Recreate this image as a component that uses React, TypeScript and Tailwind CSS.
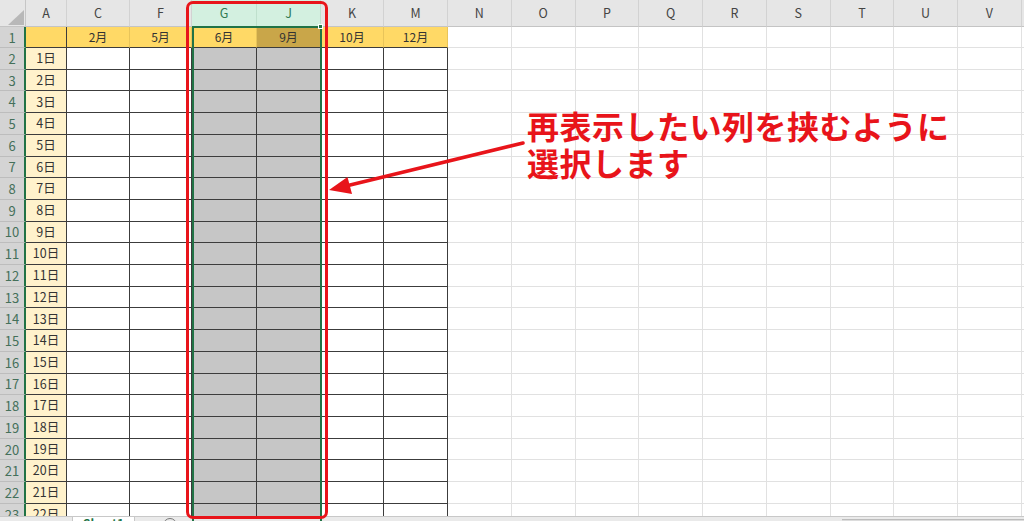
import React from 'react';

type Col = { key: string; month?: string; kind: 'a' | 'm' | 'x'; sel?: boolean };

const cols: Col[] = [
  { key: 'A', kind: 'a' },
  { key: 'C', kind: 'm', month: '2月' },
  { key: 'F', kind: 'm', month: '5月' },
  { key: 'G', kind: 'm', month: '6月', sel: true },
  { key: 'J', kind: 'm', month: '9月', sel: true },
  { key: 'K', kind: 'm', month: '10月' },
  { key: 'M', kind: 'm', month: '12月' },
  ...['N', 'O', 'P', 'Q', 'R', 'S', 'T', 'U', 'V', 'W'].map((k) => ({ key: k, kind: 'x' as const })),
];

const rows = Array.from({ length: 23 }, (_, i) => i + 1);

function headerCell(c: Col) {
  if (c.sel) {
    return (
      <div key={c.key} className="flex items-center justify-center bg-[#d3f0e0] text-[#2f7a52] border-r border-r-[#bfe0cd] border-b border-b-[#217346] text-[12.5px] leading-none">
        {c.key}
      </div>
    );
  }
  return (
    <div key={c.key} className="flex items-center justify-center bg-[#e6e6e6] text-[#444] border-r border-r-[#d2d2d2] border-b border-b-[#c4c4c4] text-[12.5px] leading-none">
      {c.key}
    </div>
  );
}

function dataCell(c: Col, r: number) {
  const k = `${c.key}${r}`;
  if (c.kind === 'a') {
    if (r === 1) {
      return <div key={k} className="bg-[#ffd966] border-r border-r-[#3c3c3c] border-b border-b-[#3c3c3c]" />;
    }
    return (
      <div key={k} className="flex items-center justify-center bg-[#fff2cc] text-[#333] border-r border-r-[#3c3c3c] border-b border-b-[#3c3c3c] text-[12.5px] leading-none">
        {r - 1}日
      </div>
    );
  }
  if (c.kind === 'm') {
    if (r === 1) {
      const dark = c.key === 'J';
      return (
        <div
          key={k}
          className={
            dark
              ? 'flex items-center justify-center bg-[#c9a649] text-[#333] border-r border-r-[#b8963c] border-b border-b-[#3c3c3c] text-[12px] leading-none'
              : 'flex items-center justify-center bg-[#ffd966] text-[#333] border-r border-r-[#e8c45a] border-b border-b-[#3c3c3c] text-[12px] leading-none'
          }
        >
          {c.month}
        </div>
      );
    }
    return (
      <div
        key={k}
        className={
          c.sel
            ? 'bg-[#c6c6c6] border-r border-r-[#3c3c3c] border-b border-b-[#3c3c3c]'
            : 'bg-white border-r border-r-[#3c3c3c] border-b border-b-[#3c3c3c]'
        }
      />
    );
  }
  return <div key={k} className="bg-white border-r border-r-[#e1e1e1] border-b border-b-[#e1e1e1]" />;
}

export default function App() {
  return (
    <div className="relative w-[1024px] h-[521px] overflow-hidden bg-white font-['Noto_Sans_CJK_JP',sans-serif]">
      <div className="h-[516px] overflow-hidden">
        <div className="grid w-max grid-cols-[26px_41px_63px_62px_65px_64px_63px_64px_repeat(10,63.75px)] grid-rows-[27px_21px_repeat(22,21.71px)]">
          {/* header row */}
          <div className="relative bg-[#e6e6e6] border-r border-r-[#c6c6c6] border-b border-b-[#c4c4c4]">
            <svg className="absolute left-0 top-0" width="26" height="27" viewBox="0 0 26 27">
              <polygon points="24,10 24,25 8,25" fill="#b8b8b8" />
            </svg>
          </div>
          {cols.map(headerCell)}

          {rows.map((r) => (
            <React.Fragment key={r}>
              <div className="flex items-center justify-center bg-[#d4d4d4] text-[#44705a] border-r-2 border-r-[#217346] border-b border-b-[#bdbdbd] text-[13px] leading-none">
                {r}
              </div>
              {cols.map((c) => dataCell(c, r))}
            </React.Fragment>
          ))}
        </div>
      </div>

      {/* sheet tabs */}
      <div className="flex h-[30px] bg-[#eaeaea] border-t border-t-[#c8c8c8]">
        <div className="w-[72px]" />
        <div className="w-[63px] bg-white border-x border-x-[#c8c8c8] pl-[10px] text-[12px] leading-[12px] font-bold text-[#217346]">
          Sheet1
        </div>
        <div className="w-[28px]" />
        <div className="mt-[1px] h-[14px] w-[14px] rounded-full border border-[#777]" />
        <div className="flex-1" />
        <div className="w-[182px] mt-[2px] bg-[#dcdcdc] border-t border-t-[#bcbcbc]" />
      </div>

      {/* selection border */}
      <div className="absolute left-[192px] top-[26px] w-[130px] h-[500px] border-x-2 border-t-2 border-[#217346]" />
      <div className="absolute left-[318px] top-[24px] w-[5px] h-[5px] bg-[#217346] border border-white" />

      {/* red highlight box */}
      <div className="absolute left-[186px] top-[1px] w-[142px] h-[518px] rounded-[7px] border-[3px] border-[#e8141a]" />

      {/* arrow */}
      <svg className="absolute left-0 top-0" width="1024" height="521" viewBox="0 0 1024 521">
        <line x1="523" y1="143" x2="346" y2="186" stroke="#e8141a" strokeWidth="3.5" strokeLinecap="round" />
        <polygon points="329,190 352,194 347.5,177" fill="#e8141a" />
      </svg>

      {/* note */}
      <div className="absolute left-[527px] top-[107px] text-[32px] leading-[37px] font-bold text-[#e8141a] tracking-[0.5px] whitespace-nowrap">
        再表示したい列を挟むように
        <br />
        選択します
      </div>
    </div>
  );
}
